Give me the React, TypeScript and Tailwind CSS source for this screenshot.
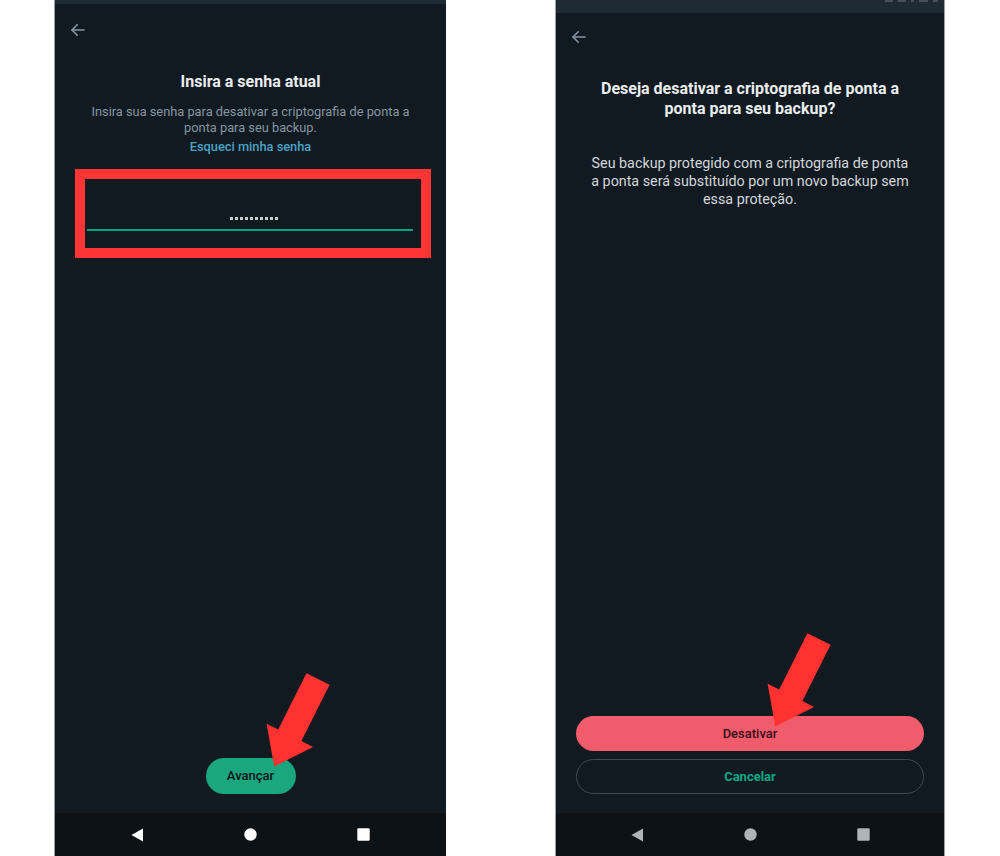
import React from "react";

const font = { fontFamily: "Roboto, 'Noto Sans', Arial, sans-serif" };

function BackArrow() {
  return (
    <svg width="18" height="18" viewBox="0 0 24 24" fill="none" stroke="#8696a0" strokeWidth="2.2" strokeLinecap="round" strokeLinejoin="round">
      <path d="M20 12H4" />
      <path d="M11 5l-7 7 7 7" />
    </svg>
  );
}

function RedArrow({ top }: { top: string }) {
  return (
    <svg
      className={`absolute left-[205px] ${top} pointer-events-none`}
      width="75"
      height="105"
      viewBox="0 0 75 105"
    >
      <polygon
        points="46.4,8.2 69.6,19.8 41.4,76.1 53,81.9 14.2,101.6 6.6,58.7 18.2,64.5"
        fill="#ff3131"
      />
    </svg>
  );
}

function NavBar({ color }: { color: string }) {
  return (
    <div className="h-[43px] bg-[#0c1216] flex items-center justify-center gap-[100px] shrink-0">
      <svg width="13" height="14" viewBox="0 0 13 14">
        <polygon points="12,0.5 12,13.5 0.5,7" fill={color} />
      </svg>
      <svg width="13" height="13" viewBox="0 0 13 13">
        <circle cx="6.5" cy="6.5" r="6.2" fill={color} />
      </svg>
      <svg width="13" height="13" viewBox="0 0 13 13">
        <rect x="0.3" y="0.3" width="12.4" height="12.4" rx="1.2" fill={color} />
      </svg>
    </div>
  );
}

function LeftPhone() {
  return (
    <div className="relative w-[392px] h-[856px] bg-[#121a21] border-l border-[#9aa0a4] flex flex-col shrink-0" style={font}>
      <div className="h-[4px] bg-[#1f2b33] shrink-0" />
      <div className="h-[52px] flex items-center pl-[14px] shrink-0">
        <BackArrow />
      </div>
      <div className="mt-[16px] text-center text-[16px] leading-[20px] font-bold text-[#e9edef]">
        Insira a senha atual
      </div>
      <div className="mt-[12px] text-center text-[12.8px] leading-[16px] text-[#8696a0]">
        Insira sua senha para desativar a criptografia de ponta a<br />
        ponta para seu backup.
      </div>
      <div className="mt-[3px] text-center text-[12.8px] leading-[16px] font-medium text-[#4aa3c6]">
        Esqueci minha senha
      </div>
      <div className="mt-[14px] ml-[20px] w-[356px] border-[10px] border-[#ff3535]">
        <div className="h-[69px] flex flex-col justify-end pb-[17px]">
          <div className="flex justify-center gap-[2px] h-[16px] items-center pl-[2px]">
            {Array.from({ length: 10 }).map((_, i) => (
              <span key={i} className="block w-[3px] h-[3px] bg-[#c8cdd0]" />
            ))}
          </div>
          <div className="mt-[3px] ml-[2px] w-[326px] h-[2px] bg-[#00a884]" />
        </div>
      </div>
      <div className="flex-1" />
      <div className="flex justify-center mb-[19px]">
        <button className="w-[90px] h-[36px] rounded-full bg-[#1aa67f] text-[#0b141a] text-[13px] font-medium" style={font}>
          Avançar
        </button>
      </div>
      <NavBar color="#ffffff" />
      <RedArrow top="top-[665px]" />
    </div>
  );
}

function RightPhone() {
  return (
    <div className="relative w-[390px] h-[856px] bg-[#121a21] border-x border-[#9aa0a4] flex flex-col shrink-0" style={font}>
      <div className="h-[13px] bg-[#1f2b33] shrink-0 flex justify-end items-start gap-[5px] pr-[6px]">
        <span className="block w-[8px] h-[2px] bg-[#46525a]" />
        <span className="block w-[8px] h-[2px] bg-[#46525a]" />
        <span className="block w-[3px] h-[2px] bg-[#46525a]" />
        <span className="block w-[9px] h-[2px] bg-[#46525a]" />
        <span className="block w-[5px] h-[2px] bg-[#46525a]" />
      </div>
      <div className="h-[48px] flex items-center pl-[14px] shrink-0">
        <BackArrow />
      </div>
      <div className="mt-[18px] text-center text-[16px] leading-[20px] font-bold text-[#e9edef]">
        Deseja desativar a criptografia de ponta a<br />
        ponta para seu backup?
      </div>
      <div className="mt-[35px] text-center text-[14.3px] leading-[18px] text-[#d1d7db]">
        Seu backup protegido com a criptografia de ponta<br />
        a ponta será substituído por um novo backup sem<br />
        essa proteção.
      </div>
      <div className="flex-1" />
      <div className="px-[20px] flex flex-col gap-[8px] mb-[19px]">
        <button className="h-[35px] w-full rounded-full bg-[#f15c6d] text-[#3a0f16] text-[13px] font-medium" style={font}>
          Desativar
        </button>
        <button className="h-[35px] w-full rounded-full border border-[#3b4a54] text-[#00a884] text-[13px] font-bold" style={font}>
          Cancelar
        </button>
      </div>
      <NavBar color="#aeb4b8" />
      <RedArrow top="top-[625px]" />
    </div>
  );
}

export default function App() {
  return (
    <div className="w-[1000px] h-[856px] bg-white flex overflow-hidden">
      <div className="w-[54px] shrink-0" />
      <LeftPhone />
      <div className="w-[109px] shrink-0" />
      <RightPhone />
    </div>
  );
}
